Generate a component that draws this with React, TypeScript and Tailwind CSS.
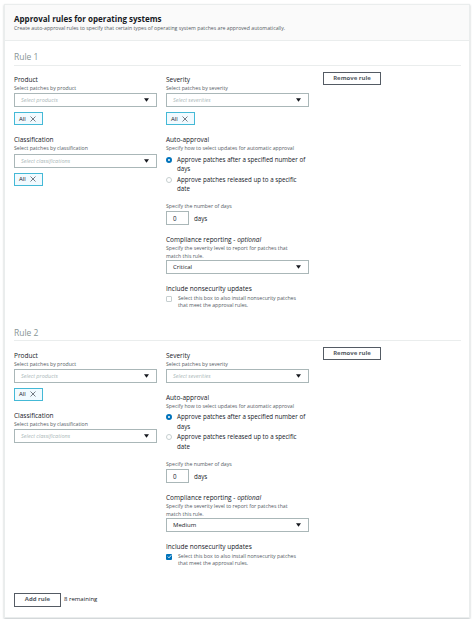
import React from 'react';

const font = "font-['Open_Sans','Noto_Sans',sans-serif]";

function Caret() {
  return (
    <svg width="5" height="4" viewBox="0 0 5 4" className="shrink-0">
      <path d="M0 0.3h5L2.5 3.7z" fill="#16191f" />
    </svg>
  );
}

function SelectBox({ text, placeholder = false }: { text: string; placeholder?: boolean }) {
  return (
    <div className="flex h-[14px] items-center justify-between border border-[#aab7b8] bg-white pl-[6px] pr-[7px]">
      <span
        className={
          placeholder
            ? 'text-[5.5px] leading-[8px] italic text-[#aab7b8]'
            : 'text-[6px] leading-[8px] font-medium text-[#16191f]'
        }
      >
        {text}
      </span>
      <Caret />
    </div>
  );
}

function Token() {
  return (
    <div className="mt-[5px] flex h-[13px] w-[29px] items-center gap-[4px] border border-[#44b9d6] bg-[#f1faff] pl-[4px]">
      <span className="text-[6px] leading-[8px] font-medium text-[#16191f]">All</span>
      <svg width="6" height="6" viewBox="0 0 6 6">
        <path d="M0.5 0.5l5 5M5.5 0.5l-5 5" stroke="#545b64" strokeWidth="0.8" />
      </svg>
    </div>
  );
}

function Label({ title, sub, className = '' }: { title: React.ReactNode; sub: React.ReactNode; className?: string }) {
  return (
    <div className={className}>
      <div className="text-[6.5px] leading-[9px] font-medium text-[#16191f]">{title}</div>
      <div className="text-[5.2px] leading-[8px] text-[#545b64]">{sub}</div>
    </div>
  );
}

function Radio({ checked, children, className = '' }: { checked: boolean; children: React.ReactNode; className?: string }) {
  return (
    <div className={`flex gap-[5px] ${className}`}>
      <div
        className={
          checked
            ? 'mt-[2px] h-[6px] w-[6px] shrink-0 rounded-full border-[2px] border-[#0073bb] bg-white'
            : 'mt-[2px] h-[6px] w-[6px] shrink-0 rounded-full border border-[#c6cfd0] bg-white'
        }
      />
      <div className="whitespace-nowrap text-[6.2px] leading-[9.5px] text-[#16191f]">{children}</div>
    </div>
  );
}

function RemoveButton() {
  return (
    <div className="mt-[6px] flex h-[13px] w-[58px] items-center justify-center border border-[#545b64] bg-white text-[6px] font-bold text-[#545b64]">
      Remove rule
    </div>
  );
}

function Rule({
  n,
  productToken,
  severityToken,
  classToken,
  compliance,
  nonsecurity,
}: {
  n: number;
  productToken: boolean;
  severityToken: boolean;
  classToken: boolean;
  compliance: string;
  nonsecurity: boolean;
}) {
  return (
    <section>
      <div className="border-b border-[#eaeded] pb-[1.5px] text-[8.5px] leading-[12px] text-[#879596]">Rule {n}</div>
      <div className="grid grid-cols-[142.5px_142.5px_1fr] gap-x-[9.5px]">
        <div className="flex flex-col pt-[9.5px]">
          <Label title="Product" sub="Select patches by product" />
          <div className="mt-[1px]">
            <SelectBox text="Select products" placeholder />
          </div>
          {productToken && <Token />}
          <Label className="mt-[10px]" title="Classification" sub="Select patches by classification" />
          <div className="mt-[1.5px]">
            <SelectBox text="Select classifications" placeholder />
          </div>
          {classToken && <Token />}
        </div>

        <div className="flex flex-col pt-[9.5px]">
          <Label title="Severity" sub="Select patches by severity" />
          <div className="mt-[1px]">
            <SelectBox text="Select severities" placeholder />
          </div>
          {severityToken && <Token />}
          <Label className="mt-[10px]" title="Auto-approval" sub="Specify how to select updates for automatic approval" />
          <Radio checked className="mt-[2.5px]">
            Approve patches after a specified number of
            <br />
            days
          </Radio>
          <Radio checked={false} className="mt-[1px]">
            Approve patches released up to a specific
            <br />
            date
          </Radio>
          <div className="mt-[8.5px] text-[5.2px] leading-[8px] text-[#545b64]">Specify the number of days</div>
          <div className="mt-[1.3px] flex items-center gap-[5px]">
            <div className="flex h-[14px] w-[23px] items-center border border-[#aab7b8] bg-white pl-[6px] text-[6.2px] text-[#16191f]">
              0
            </div>
            <span className="text-[6.2px] text-[#16191f]">days</span>
          </div>
          <div className="mt-[10.5px]">
            <div className="text-[6.5px] leading-[8px] font-medium text-[#16191f]">
              Compliance reporting - <span className="italic">optional</span>
            </div>
            <div className="text-[5.2px] leading-[8px] text-[#545b64]">
              Specify the severity level to report for patches that
              <br />
              match this rule.
            </div>
          </div>
          <div className="mt-[0.7px]">
            <SelectBox text={compliance} />
          </div>
          <div className="mt-[10.5px] text-[6.5px] leading-[8px] font-medium text-[#16191f]">
            Include nonsecurity updates
          </div>
          <div className="mt-[2px] flex gap-[6px]">
            {nonsecurity ? (
              <div className="mt-[1px] flex h-[6px] w-[6px] shrink-0 items-center justify-center rounded-[1px] bg-[#0073bb]">
                <svg width="5" height="5" viewBox="0 0 5 5">
                  <path d="M0.8 2.6l1.2 1.2L4.3 1.2" stroke="#fff" strokeWidth="0.9" fill="none" />
                </svg>
              </div>
            ) : (
              <div className="mt-[1px] h-[6px] w-[6px] shrink-0 rounded-[1px] border border-[#c6cfd0] bg-white" />
            )}
            <div className="text-[5.2px] leading-[7.5px] text-[#545b64]">
              Select this box to also install nonsecurity patches
              <br />
              that meet the approval rules.
            </div>
          </div>
        </div>

        <div className="flex flex-col items-start pl-[5px]">
          <RemoveButton />
        </div>
      </div>
    </section>
  );
}

export default function App() {
  return (
    <div className={`${font} min-h-[619px] bg-white pt-[4px]`}>
      <div className="ml-[4px] w-[466px] border border-[#eaeded] bg-white shadow-[0_1px_2px_rgba(0,28,36,0.25)]">
        <div className="h-[36px] border-b border-[#eaeded] bg-[#fafafa] pl-[9px] pt-[8px]">
          <div className="text-[8px] leading-[11px] font-bold text-[#16191f]">Approval rules for operating systems</div>
          <div className="text-[5.2px] leading-[8px] text-[#545b64]">
            Create auto-approval rules to specify that certain types of operating system patches are approved automatically.
          </div>
        </div>
        <div className="pb-[10px] pl-[9px] pr-[8px] pt-[10px]">
          <Rule n={1} productToken severityToken classToken compliance="Critical" nonsecurity={false} />
          <div className="mt-[17px]">
            <Rule n={2} productToken severityToken={false} classToken={false} compliance="Medium" nonsecurity />
          </div>
          <div className="mt-[25px] flex items-center gap-[3px]">
            <div className="flex h-[14px] w-[47px] items-center justify-center border border-[#545b64] bg-white text-[6px] font-bold text-[#545b64]">
              Add rule
            </div>
            <span className="text-[6px] text-[#16191f]">8 remaining</span>
          </div>
        </div>
      </div>
    </div>
  );
}
